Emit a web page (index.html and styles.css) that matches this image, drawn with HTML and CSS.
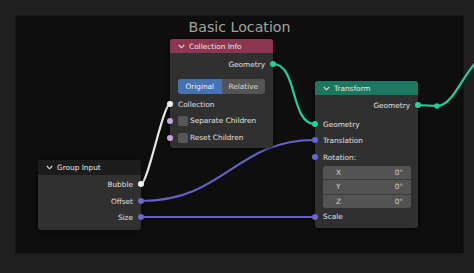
FILE: index.html
```html
<!DOCTYPE html>
<html>
<head>
<meta charset="utf-8">
<link rel="stylesheet" href="styles.css">
</head>
<body>
<div class="canvas">
  <div class="title">Basic Location</div>

  <svg class="wires" width="474" height="273" viewBox="0 0 474 273">
    <path class="w white" d="M141,184 C148,184 163,104 170,104"/>
    <path class="w green" d="M273,64 C298,64 290,124 315,124"/>
    <path class="w blue" d="M141,201 C225,201 235,140 315,140"/>
    <path class="w blue" d="M141,217 L315,217"/>
    <path class="w green" d="M418,105 L437,106"/>
    <path class="w green" d="M437,106 C452,106 460,80 476,62"/>
    <circle cx="437" cy="106" r="2.8" class="reroute"/>
  </svg>

  <div class="node n-coll">
    <div class="head head-coll">
      <svg class="chev" width="7" height="5" viewBox="0 0 7 5"><polyline points="0.8,1 3.5,3.8 6.2,1"/></svg>
      <span>Collection Info</span>
    </div>
    <div class="body b-coll">
      <div class="row out"><span>Geometry</span><i class="sock s-geo"></i></div>
      <div class="seg"><span class="seg-on">Original</span><span class="seg-off">Relative</span></div>
      <div class="row in r-coll"><i class="sock s-white"></i><span>Collection</span></div>
      <div class="row in r-chk"><i class="sock s-bool"></i><b class="chk"></b><span>Separate Children</span></div>
      <div class="row in r-chk"><i class="sock s-bool"></i><b class="chk"></b><span>Reset Children</span></div>
    </div>
  </div>

  <div class="node n-tr">
    <div class="head head-tr">
      <svg class="chev" width="7" height="5" viewBox="0 0 7 5"><polyline points="0.8,1 3.5,3.8 6.2,1"/></svg>
      <span>Transform</span>
    </div>
    <div class="body b-tr">
      <div class="row out"><span>Geometry</span><i class="sock s-geo"></i></div>
      <div class="row in r-gin"><i class="sock s-geo"></i><span>Geometry</span></div>
      <div class="row in"><i class="sock s-vec"></i><span>Translation</span></div>
      <div class="row in r-rot"><i class="sock s-vec"></i><span>Rotation:</span></div>
      <div class="vbox">
        <div class="vrow"><span>X</span><span>0°</span></div>
        <div class="vrow"><span>Y</span><span>0°</span></div>
        <div class="vrow"><span>Z</span><span>0°</span></div>
      </div>
      <div class="row in r-scale"><i class="sock s-vec"></i><span>Scale</span></div>
    </div>
  </div>

  <div class="node n-gi">
    <div class="head head-gi">
      <svg class="chev" width="7" height="5" viewBox="0 0 7 5"><polyline points="0.8,1 3.5,3.8 6.2,1"/></svg>
      <span>Group Input</span>
    </div>
    <div class="body b-gi">
      <div class="row out"><span>Bubble</span><i class="sock s-white"></i></div>
      <div class="row out r-off"><span>Offset</span><i class="sock s-vec"></i></div>
      <div class="row out"><span>Size</span><i class="sock s-vec"></i></div>
    </div>
  </div>
</div>
</body>
</html>
```

FILE: styles.css
```css
html, body {
  margin: 0;
  padding: 0;
}
body {
  width: 474px;
  height: 273px;
  overflow: hidden;
  background: #1f1f1f;
  font-family: "DejaVu Sans", "Liberation Sans", sans-serif;
}
.canvas {
  position: relative;
  margin: 16px;
  width: 447px;
  height: 237px;
  background: #0e0e0e;
  box-shadow: 0 0 0 1px #161616;
}
.title {
  padding-top: 3px;
  text-align: center;
  font-size: 14.2px;
  line-height: 16px;
  color: #a2a2a2;
}
.wires {
  position: absolute;
  left: -16px;
  top: -16px;
  overflow: visible;
  z-index: 1;
  pointer-events: none;
}
.w {
  fill: none;
  stroke-width: 2.2;
  stroke-linecap: round;
}
.white { stroke: #e6e6e6; }
.green { stroke: #1fcf9d; }
.blue { stroke: #6262c4; }
.reroute { fill: #1fcf9d; }

.node {
  position: absolute;
  width: 103px;
  background: #303030;
  border-radius: 3px;
  box-shadow: 0 1px 4px rgba(0,0,0,0.6);
  z-index: 2;
  color: #e0e0e0;
  font-size: 7.35px;
}
.n-coll { left: 154px; top: 23px; }
.n-tr { left: 299px; top: 65px; }
.n-gi { left: 22px; top: 144px; }

.head {
  height: 14px;
  display: flex;
  align-items: center;
  padding-left: 8px;
  gap: 4px;
  border-radius: 3px 3px 0 0;
  color: #e8e8e8;
}
.head-coll { background: #8c3652; }
.head-tr { background: #1d765f; }
.head-gi { background: #1c1c1c; height: 15px; }
.chev polyline {
  fill: none;
  stroke: #dedede;
  stroke-width: 1.1;
}

.body { display: flex; flex-direction: column; }
.b-coll { padding: 3px 0 2px; }
.b-tr { padding: 2px 0 3px; }
.b-gi { padding: 1px 0 5px; }

.row {
  position: relative;
  height: 16px;
  display: flex;
  align-items: center;
  padding: 0 8px;
  white-space: nowrap;
}
.row.out { justify-content: flex-end; padding-right: 8px; }
.sock {
  position: absolute;
  top: 50%;
  width: 6px;
  height: 6px;
  margin-top: -3px;
  border-radius: 50%;
  z-index: 3;
}
.out .sock { right: -3px; }
.in .sock { left: -3px; }
.s-geo { background: #20d3a0; }
.s-white { background: #f2f2f2; }
.s-vec { background: #6767cf; }
.s-bool { background: #c8a3d6; }

.seg {
  display: flex;
  margin: 7px 8px 0;
  height: 15px;
  border-radius: 3px;
  overflow: hidden;
}
.seg span {
  flex: 1;
  display: flex;
  align-items: center;
  justify-content: center;
}
.seg-on { background: #4672b4; color: #f0f0f0; }
.seg-off { background: #545454; color: #d8d8d8; }

.r-coll { margin-top: 2px; }
.r-chk { height: 17px; }
.chk {
  width: 10px;
  height: 10px;
  border-radius: 2px;
  background: #565656;
  margin-right: 2px;
}

.r-gin { margin-top: 3px; }
.r-rot { margin-top: 1px; }
.r-scale { margin-top: 1px; }
.r-off { margin-top: 1px; }

.vbox {
  margin: 1px 7px 0 8px;
  border-radius: 3px;
  overflow: hidden;
  display: flex;
  flex-direction: column;
  gap: 1px;
  background: #3c3c3c;
}
.vrow {
  height: 13.3px;
  display: flex;
  align-items: center;
  justify-content: space-between;
  padding: 0 8px 0 13px;
  background: #535353;
  color: #cfcfcf;
}
```
